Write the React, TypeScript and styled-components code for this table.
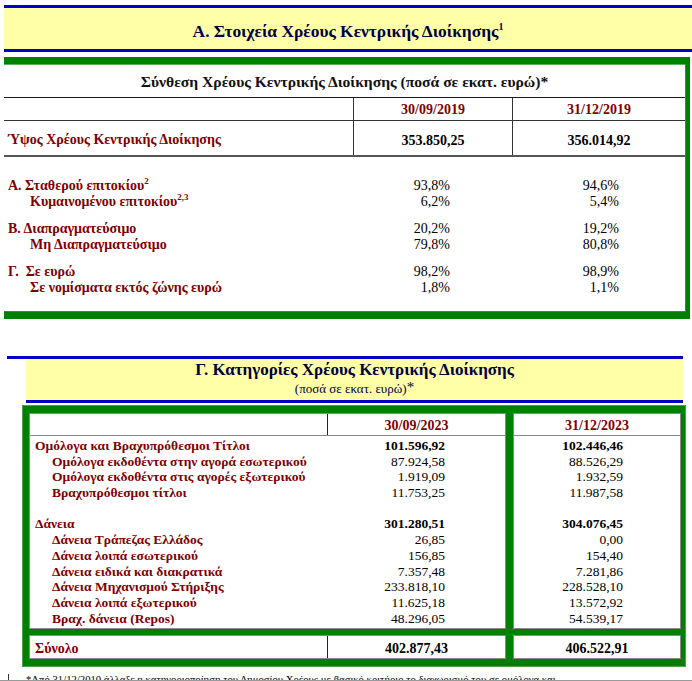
import React from 'react';
import styled, { createGlobalStyle } from 'styled-components';

const BLUE = '#0000c4';
const YELLOW = '#ffffa8';
const GREEN = '#008000';
const RED = '#800000';
const NAVY = '#000040';

const GlobalStyle = createGlobalStyle`
  *, *::before, *::after { box-sizing: border-box; }
  html, body { margin: 0; padding: 0; background: #ffffff; }
  body { font-family: "Liberation Serif", "Times New Roman", serif; color: #000; }
  #root { width: 692px; height: 681px; overflow: hidden; }
`;

const Page = styled.div`
  width: 692px;
  height: 681px;
  overflow: hidden;
  background: #fff;
  display: flex;
  flex-direction: column;
`;

/* ---------- Section A ---------- */

const Banner = styled.header`
  margin: 5px 0 0 4px;
  height: 47px;
  background: ${YELLOW};
  border-top: 3px solid ${BLUE};
  border-bottom: 3px solid ${BLUE};
  display: flex;
  align-items: center;
  justify-content: center;
  padding-top: 5px;
`;

const BannerTitle = styled.h1`
  margin: 0;
  font-size: 17.4px;
  font-weight: bold;
  color: ${NAVY};
  line-height: 20px;
  sup {
    font-size: 10px;
    vertical-align: 7px;
    line-height: 0;
  }
`;

const Panel = styled.section`
  margin: 5px 0 0 4px;
  width: 686px;
  height: 263px;
  border-top: 7px solid ${GREEN};
  border-right: 4px solid ${GREEN};
  border-bottom: 7px solid ${GREEN};
  box-shadow: inset 0 1px 0 #5fae5f;
`;

const PanelInner = styled.div`
  height: 100%;
  border-right: 1px solid #6a6a6a;
  border-bottom: 1px solid #6a6a6a;
  display: flex;
  flex-direction: column;
`;

const PanelTitle = styled.div`
  height: 34px;
  border-bottom: 1px solid #1a1a1a;
  display: flex;
  align-items: center;
  justify-content: center;
  padding-top: 3px;
  font-size: 15.6px;
  font-weight: bold;
  color: #111;
`;

const Row3 = styled.div<{ $h: number; $line?: string }>`
  display: grid;
  grid-template-columns: 349px 159px 1fr;
  height: ${(p) => p.$h}px;
  border-bottom: ${(p) => p.$line || 'none'};
`;

const DateCell = styled.div<{ $divider?: boolean }>`
  display: flex;
  align-items: center;
  justify-content: center;
  border-left: ${(p) => (p.$divider ? '1px solid #333' : 'none')};
  font-size: 14px;
  font-weight: bold;
  color: ${RED};
  padding-top: 2px;
`;

const LabelCell = styled.div<{ $indent?: number; $bold?: boolean }>`
  display: flex;
  align-items: center;
  padding-left: ${(p) => 4 + (p.$indent || 0)}px;
  font-size: 14px;
  font-weight: bold;
  color: ${RED};
  white-space: pre;
  padding-top: 5px;
`;

const BigValue = styled.div<{ $divider?: boolean }>`
  display: flex;
  align-items: center;
  justify-content: center;
  border-left: ${(p) => (p.$divider ? '1px solid #333' : 'none')};
  font-size: 14px;
  font-weight: bold;
  padding-top: 7px;
`;

const Groups = styled.div`
  padding-top: 21px;
  display: flex;
  flex-direction: column;
  gap: 11px;
`;

const PctRow = styled.div`
  display: grid;
  grid-template-columns: 349px 159px 1fr;
  height: 16px;
  line-height: 16px;
`;

const PctLabel = styled.div<{ $indent?: number }>`
  padding-left: ${(p) => 4 + (p.$indent || 0)}px;
  font-size: 14px;
  font-weight: bold;
  color: ${RED};
  white-space: pre;
  sup {
    font-size: 9px;
    vertical-align: 6px;
    line-height: 0;
  }
`;

const PctValue = styled.div<{ $pr: number }>`
  text-align: right;
  padding-right: ${(p) => p.$pr}px;
  font-size: 14px;
`;

/* ---------- Section Γ ---------- */

const Banner2 = styled.header`
  margin: 37px 0 0 7px;
  width: 676px;
  border-top: 3px solid ${BLUE};
`;

const Banner2Box = styled.div`
  margin-left: 19px;
  height: 44px;
  background: ${YELLOW};
  border-bottom: 3px solid ${BLUE};
  display: flex;
  flex-direction: column;
  align-items: center;
  padding-top: 1px;
`;

const Banner2Title = styled.h2`
  margin: 0;
  font-size: 17px;
  line-height: 20px;
  font-weight: bold;
  color: ${NAVY};
`;

const Banner2Sub = styled.div`
  font-size: 13px;
  line-height: 17px;
  color: ${NAVY};
  span {
    font-size: 15px;
    vertical-align: 1px;
    line-height: 0;
  }
`;

const Table2 = styled.section`
  margin: 2px 0 0 22px;
  width: 664px;
  height: 262px;
  background: ${GREEN};
  border: 1px solid #4f9f4f;
  padding: 7px 4px 7px 6px;
  display: grid;
  grid-template-columns: 477px 168px;
  grid-template-rows: 216px 24px;
  gap: 6px 7px;
`;

const Cell = styled.div`
  background: #fff;
  border: 1px solid #8a8a8a;
  display: flex;
  flex-direction: column;
`;

const HeadRow = styled.div<{ $cols: string }>`
  display: grid;
  grid-template-columns: ${(p) => p.$cols};
  height: 22px;
  border-bottom: 1px solid #8a8a8a;
  flex: none;
`;

const HeadBlank = styled.div`
  border-right: 1px solid #222;
`;

const HeadDate = styled.div`
  display: flex;
  align-items: center;
  justify-content: center;
  font-size: 14px;
  font-weight: bold;
  color: ${RED};
  padding-top: 2px;
`;

const Lines = styled.div`
  padding-top: 2px;
  display: flex;
  flex-direction: column;
`;

const Line = styled.div<{ $cols: string }>`
  display: grid;
  grid-template-columns: ${(p) => p.$cols};
  height: 15.7px;
  line-height: 15.7px;
  font-size: 13.5px;
`;

const Lbl = styled.div<{ $sub?: boolean }>`
  padding-left: ${(p) => (p.$sub ? 22 : 5)}px;
  font-weight: bold;
  color: ${RED};
  white-space: nowrap;
`;

const Num = styled.div<{ $bold?: boolean; $pr: number }>`
  text-align: right;
  padding-right: ${(p) => p.$pr}px;
  font-weight: ${(p) => (p.$bold ? 'bold' : 'normal')};
`;

const TotalRow = styled.div<{ $cols: string }>`
  display: grid;
  grid-template-columns: ${(p) => p.$cols};
  height: 100%;
  font-size: 14px;
  font-weight: bold;
`;

const TotalLabel = styled.div`
  display: flex;
  align-items: center;
  padding: 4px 0 0 5px;
  border-right: 1px solid #222;
  color: ${RED};
`;

const TotalValue = styled.div`
  display: flex;
  align-items: center;
  justify-content: center;
  padding-top: 4px;
`;

const Footer = styled.footer`
  margin-top: 3px;
  height: 11px;
  border-bottom: 1px solid #9a9a9a;
  display: flex;
  align-items: flex-start;
  overflow: hidden;
`;

const Tick = styled.span`
  margin: 4px 0 0 8px;
  width: 1px;
  height: 8px;
  background: #333;
  flex: none;
`;

const FootText = styled.span`
  margin-left: 17px;
  font-size: 10.7px;
  line-height: 12px;
  white-space: nowrap;
  padding-top: 3px;
`;

type PRow = { label: string; sup?: string; indent?: number; a: string; b: string };

const groups: PRow[][] = [
  [
    { label: 'Α. Σταθερού επιτοκίου', sup: '2', a: '93,8%', b: '94,6%' },
    { label: 'Κυμαινομένου επιτοκίου', sup: '2,3', indent: 22, a: '6,2%', b: '5,4%' },
  ],
  [
    { label: 'Β. Διαπραγματεύσιμο', a: '20,2%', b: '19,2%' },
    { label: 'Μη Διαπραγματεύσιμο', indent: 22, a: '79,8%', b: '80,8%' },
  ],
  [
    { label: 'Γ.  Σε ευρώ', a: '98,2%', b: '98,9%' },
    { label: 'Σε νομίσματα εκτός ζώνης ευρώ', indent: 22, a: '1,8%', b: '1,1%' },
  ],
];

type DRow = { label: string; sub?: boolean; bold?: boolean; a: string; b: string } | null;

const debtRows: DRow[] = [
  { label: 'Ομόλογα και Βραχυπρόθεσμοι Τίτλοι', bold: true, a: '101.596,92', b: '102.446,46' },
  { label: 'Ομόλογα εκδοθέντα στην αγορά εσωτερικού', sub: true, a: '87.924,58', b: '88.526,29' },
  { label: 'Ομόλογα εκδοθέντα στις αγορές εξωτερικού', sub: true, a: '1.919,09', b: '1.932,59' },
  { label: 'Βραχυπρόθεσμοι τίτλοι', sub: true, a: '11.753,25', b: '11.987,58' },
  null,
  { label: 'Δάνεια', bold: true, a: '301.280,51', b: '304.076,45' },
  { label: 'Δάνεια Τράπεζας Ελλάδος', sub: true, a: '26,85', b: '0,00' },
  { label: 'Δάνεια λοιπά εσωτερικού', sub: true, a: '156,85', b: '154,40' },
  { label: 'Δάνεια ειδικά και διακρατικά', sub: true, a: '7.357,48', b: '7.281,86' },
  { label: 'Δάνεια Μηχανισμού Στήριξης', sub: true, a: '233.818,10', b: '228.528,10' },
  { label: 'Δάνεια λοιπά εξωτερικού', sub: true, a: '11.625,18', b: '13.572,92' },
  { label: 'Βραχ. δάνεια (Repos)', sub: true, a: '48.296,05', b: '54.539,17' },
];

const LEFT_COLS = '298px 1fr';
const RIGHT_COLS = '1fr';

export default function App() {
  return (
    <Page>
      <GlobalStyle />
      <Banner>
        <BannerTitle>
          Α. Στοιχεία Χρέους Κεντρικής Διοίκησης<sup>1</sup>
        </BannerTitle>
      </Banner>

      <Panel>
        <PanelInner>
          <PanelTitle>Σύνθεση Χρέους Κεντρικής Διοίκησης (ποσά σε εκατ. ευρώ)*</PanelTitle>
          <Row3 $h={23} $line="1px solid #333">
            <div />
            <DateCell $divider>30/09/2019</DateCell>
            <DateCell $divider>31/12/2019</DateCell>
          </Row3>
          <Row3 $h={36} $line="2px solid #555">
            <LabelCell>Ύψος Χρέους Κεντρικής Διοίκησης</LabelCell>
            <BigValue $divider>353.850,25</BigValue>
            <BigValue $divider>356.014,92</BigValue>
          </Row3>
          <Groups>
            {groups.map((g, gi) => (
              <div key={gi}>
                {g.map((r) => (
                  <PctRow key={r.label}>
                    <PctLabel $indent={r.indent}>
                      {r.label}
                      {r.sup && <sup>{r.sup}</sup>}
                    </PctLabel>
                    <PctValue $pr={62}>{r.a}</PctValue>
                    <PctValue $pr={66}>{r.b}</PctValue>
                  </PctRow>
                ))}
              </div>
            ))}
          </Groups>
        </PanelInner>
      </Panel>

      <Banner2>
        <Banner2Box>
          <Banner2Title>Γ. Κατηγορίες Χρέους Κεντρικής Διοίκησης</Banner2Title>
          <Banner2Sub>
            (ποσά σε εκατ. ευρώ)<span>*</span>
          </Banner2Sub>
        </Banner2Box>
      </Banner2>

      <Table2>
        <Cell>
          <HeadRow $cols={LEFT_COLS}>
            <HeadBlank />
            <HeadDate>30/09/2023</HeadDate>
          </HeadRow>
          <Lines>
            {debtRows.map((r, i) =>
              r ? (
                <Line key={i} $cols={LEFT_COLS}>
                  <Lbl $sub={r.sub}>{r.label}</Lbl>
                  <Num $bold={r.bold} $pr={60}>{r.a}</Num>
                </Line>
              ) : (
                <Line key={i} $cols={LEFT_COLS} />
              )
            )}
          </Lines>
        </Cell>
        <Cell>
          <HeadRow $cols={RIGHT_COLS}>
            <HeadDate>31/12/2023</HeadDate>
          </HeadRow>
          <Lines>
            {debtRows.map((r, i) =>
              r ? (
                <Line key={i} $cols={RIGHT_COLS}>
                  <Num $bold={r.bold} $pr={57}>{r.b}</Num>
                </Line>
              ) : (
                <Line key={i} $cols={RIGHT_COLS} />
              )
            )}
          </Lines>
        </Cell>
        <Cell>
          <TotalRow $cols={LEFT_COLS}>
            <TotalLabel>Σύνολο</TotalLabel>
            <TotalValue>402.877,43</TotalValue>
          </TotalRow>
        </Cell>
        <Cell>
          <TotalRow $cols={RIGHT_COLS}>
            <TotalValue>406.522,91</TotalValue>
          </TotalRow>
        </Cell>
      </Table2>

      <Footer>
        <Tick />
        <FootText>
          *Από 31/12/2010 άλλαξε η κατηγοριοποίηση του Δημοσίου Χρέους με βασικό κριτήριο το διαχωρισμό του σε ομόλογα και
        </FootText>
      </Footer>
    </Page>
  );
}
